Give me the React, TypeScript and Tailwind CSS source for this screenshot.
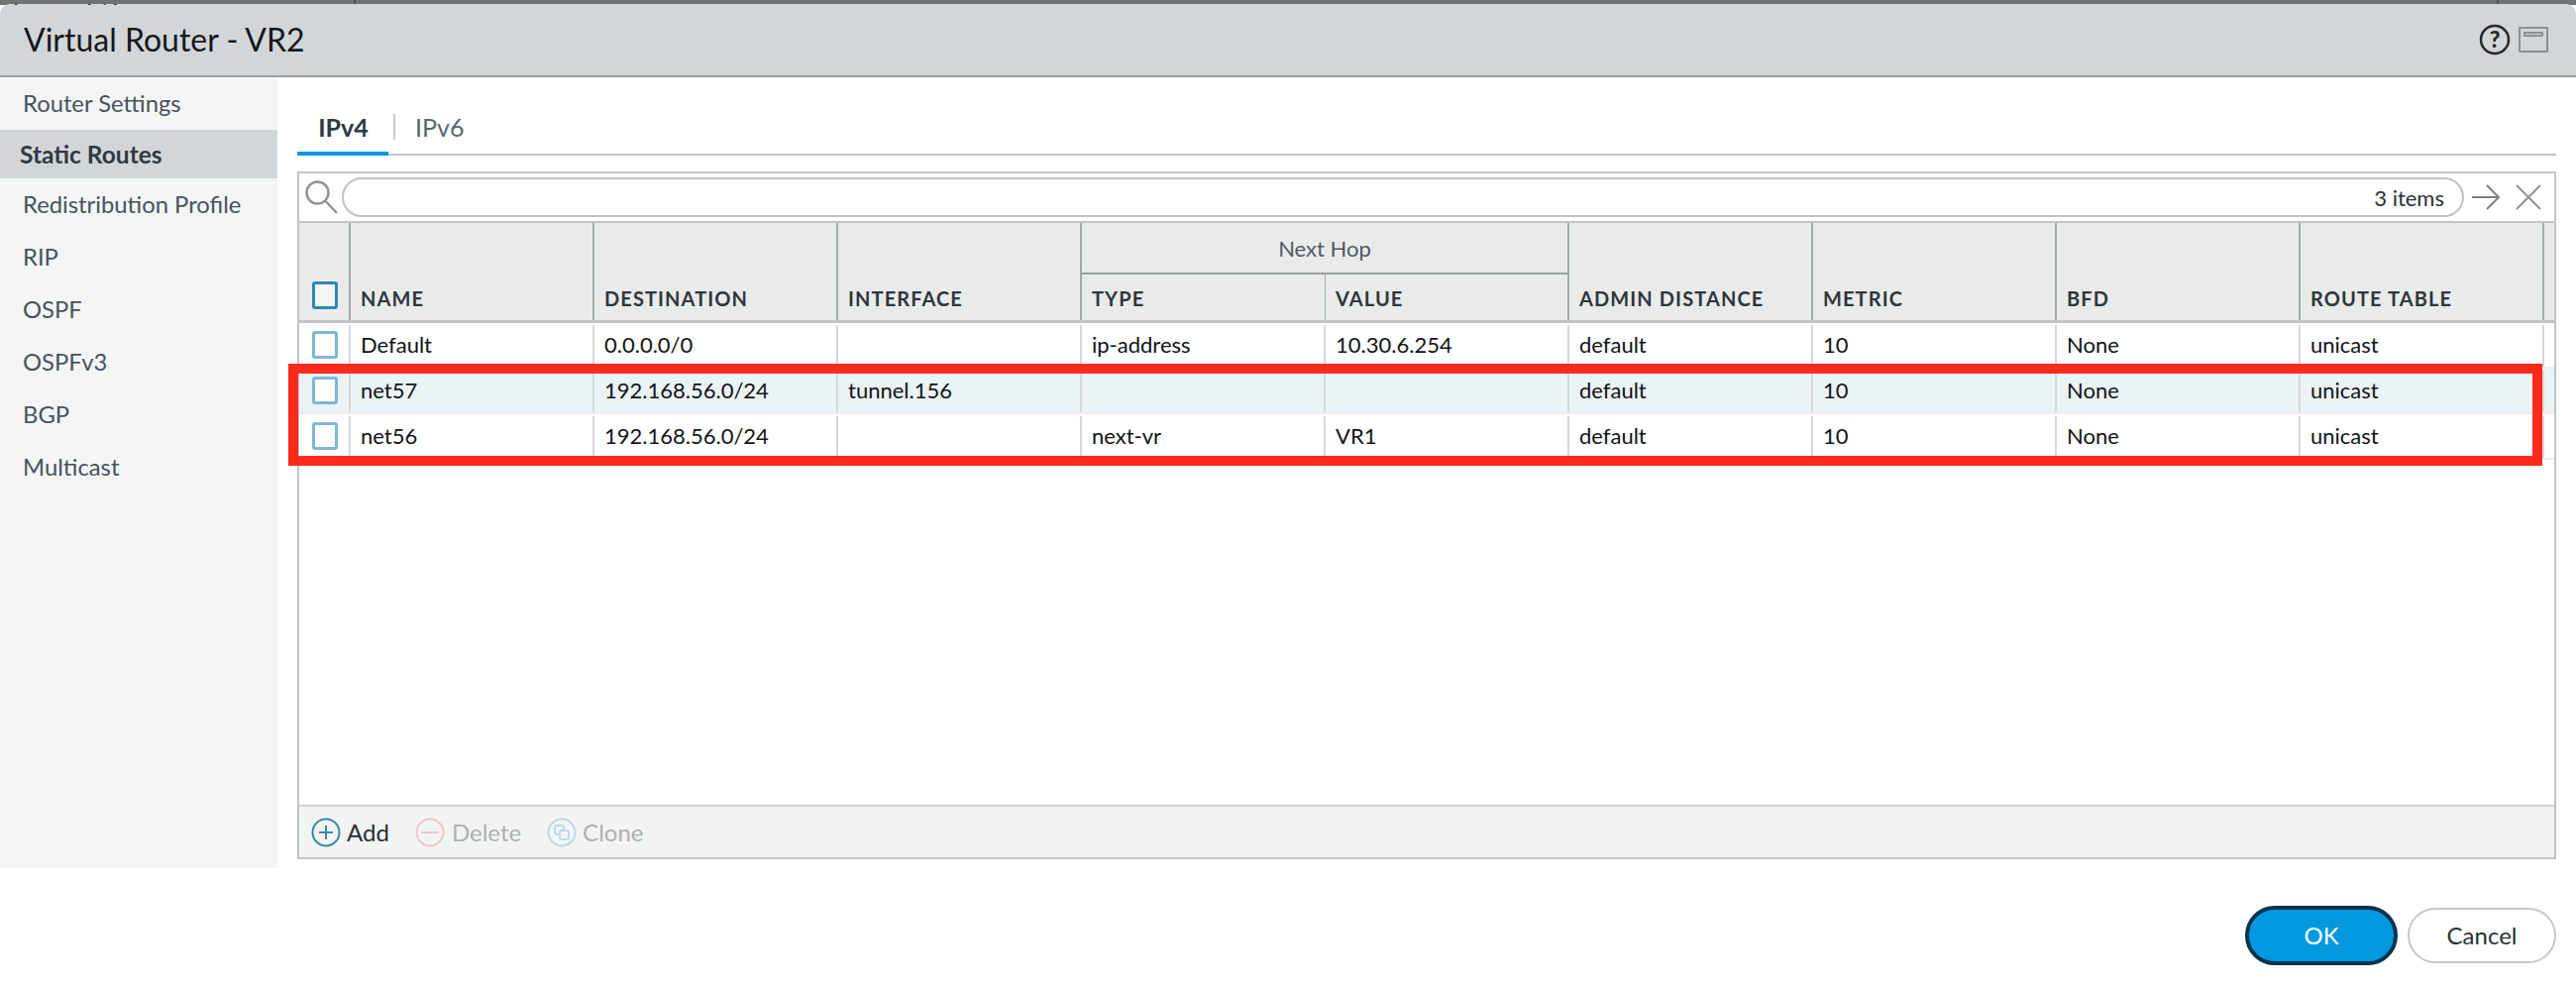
import { ReactNode } from 'react'

const sideItems = ['Redistribution Profile', 'RIP', 'OSPF', 'OSPFv3', 'BGP', 'Multicast']

const rows = [
  { name: 'Default', dest: '0.0.0.0/0', iface: '', type: 'ip-address', value: '10.30.6.254', hover: false },
  { name: 'net57', dest: '192.168.56.0/24', iface: 'tunnel.156', type: '', value: '', hover: true },
  { name: 'net56', dest: '192.168.56.0/24', iface: '', type: 'next-vr', value: 'VR1', hover: false },
]

function Check({ strong }: { strong?: boolean }) {
  return (
    <div
      className={
        strong
          ? 'w-[26px] h-[28px] rounded-[3px] border-[3px] border-[#2f87b3] bg-[#f4f6f7]'
          : 'w-[26px] h-[28px] rounded-[3px] border-[3px] border-[#7db8d4] bg-white'
      }
    />
  )
}

function HeadCell({ children, w = 'w-[246px]' }: { children?: ReactNode; w?: string }) {
  return (
    <div className={`${w} h-full shrink-0 border-r-2 border-[#a3a8ab] flex items-end pl-[10px] pb-[10px]`}>
      <span className="text-[20px] leading-[24px] font-bold tracking-[1.1px] text-[#2f363c]">{children}</span>
    </div>
  )
}

function Cell({ children, w = 'w-[246px]' }: { children?: ReactNode; w?: string }) {
  return (
    <div className={`${w} shrink-0 h-full pt-[2px]`}>
      <div className="h-full border-r-2 border-[#d5d8da] flex items-center pl-[10px] pb-[3px] text-[22px] text-[#111416]">
        {children}
      </div>
    </div>
  )
}

export default function App() {
  return (
    <div className="w-[2600px] h-[998px] overflow-hidden bg-white font-['Lato',sans-serif] flex flex-col">
      {/* page behind the dialog, only a sliver shows */}
      <div className="h-[5px] shrink-0 bg-[#6e7373] flex items-end overflow-hidden text-[24px] leading-[24px] text-[#1c1f21]">
        <div className="w-[359px] h-full border-r-2 border-[#4f5355] flex items-end">
          <span className="block translate-y-[19px] -ml-[8px]">ethernet1/6</span>
        </div>
        <div className="w-[2163px] h-full border-r-2 border-[#4f5355]" />
      </div>

      <div className="-mt-[1px] h-[74px] shrink-0 bg-[#d3d6d9] border-b-2 border-[#9b9fa2] rounded-t-[10px] flex items-center justify-between pl-[24px] pr-[28px]">
        <h1 className="text-[32px] font-normal text-[#14181b]">Virtual Router - VR2</h1>
        <div className="flex items-center gap-[8px]">
          <svg width="32" height="32" viewBox="0 0 32 32" fill="none">
            <circle cx="16" cy="16" r="14" stroke="#23282c" strokeWidth="2.5" />
            <text x="16" y="24" textAnchor="middle" fontSize="23" fontWeight="900" fill="#23282c" fontFamily="Lato, sans-serif">?</text>
          </svg>
          <div className="w-[30px] h-[26px] border-2 border-[#8a8f92] rounded-[1px] p-[3px]">
            <div className="h-[5px] border-2 border-[#8a8f92] rounded-[1px]" />
          </div>
        </div>
      </div>

      <div className="flex-1 flex min-h-0">
        <aside className="w-[280px] h-[798px] shrink-0 bg-[#f4f5f5] text-[23.8px] text-[#47535c] flex flex-col">
          <div className="h-[53px] flex items-center pl-[23px]">Router Settings</div>
          <div className="h-[49px] flex items-center pl-[20px] pt-[1px] bg-[#d3d6d9] font-bold text-[#2f3a42] text-[24.5px]">Static Routes</div>
          {sideItems.map((item) => (
            <div key={item} className="h-[53px] flex items-center pl-[23px]">
              {item}
            </div>
          ))}
        </aside>

        <main className="flex-1 pl-[20px] pr-[20px] flex flex-col min-w-0">
          <div className="h-[79px] shrink-0 border-b-2 border-[#c0c4c8] flex items-end">
            <div className="w-[92px] h-[45px] border-b-4 border-[#0096dc] -mb-[2px] rounded-b-[1px] flex items-center justify-center text-[25px] font-bold text-[#2f3a42] pb-[7px] pl-[1px]">
              IPv4
            </div>
            <div className="w-[2px] h-[26px] bg-[#c8cbce] ml-[5px] mb-[14px]" />
            <div className="h-[45px] ml-[20px] flex items-center text-[25px] text-[#5a666e] pb-[7px]">IPv6</div>
          </div>

          <div className="mt-[16px] h-[694px] shrink-0 border-2 border-[#c0c4c8] flex flex-col relative">
            <div className="h-[50px] shrink-0 border-b-2 border-[#c0c4c8] flex items-center">
              <svg className="ml-[6px] shrink-0" width="34" height="34" viewBox="0 0 34 34" fill="none">
                <circle cx="12.5" cy="12.5" r="11" stroke="#8f9498" strokeWidth="2.5" />
                <path d="M20.5 21 L32 33" stroke="#8f9498" strokeWidth="2.5" />
              </svg>
              <div className="ml-[3px] w-[2142px] h-[40px] shrink-0 rounded-full border-2 border-[#bfc3c6] flex items-center justify-end pr-[18px] text-[22px] text-[#2a3136]">
                3 items
              </div>
              <svg className="ml-[7px] shrink-0" width="30" height="28" viewBox="0 0 30 28" fill="none">
                <path d="M1 14 H28 M16 2 L28 14 L16 26" stroke="#7b8084" strokeWidth="2" />
              </svg>
              <svg className="ml-[14px] shrink-0" width="28" height="28" viewBox="0 0 28 28" fill="none">
                <path d="M2 2 L26 26 M26 2 L2 26" stroke="#8f9497" strokeWidth="2" />
              </svg>
            </div>

            <div className="h-[98px] shrink-0 bg-[#e9ebea] flex">
              <div className="w-[52px] h-full shrink-0 border-r-2 border-[#a3a8ab] flex items-end pl-[13px] pb-[11px]">
                <Check strong />
              </div>
              <HeadCell>NAME</HeadCell>
              <HeadCell>DESTINATION</HeadCell>
              <HeadCell>INTERFACE</HeadCell>
              <div className="w-[492px] shrink-0 h-full border-r-2 border-[#a3a8ab] flex flex-col">
                <div className="h-[52px] border-b-2 border-[#9ba0a3] flex items-center justify-center text-[22px] text-[#4f5a62]">
                  Next Hop
                </div>
                <div className="flex-1 flex">
                  <div className="w-[246px] h-full border-r border-[#a3a8ab] flex items-end pl-[10px] pb-[10px]">
                    <span className="text-[20px] leading-[24px] font-bold tracking-[1.1px] text-[#2f363c]">TYPE</span>
                  </div>
                  <div className="flex items-end pl-[10px] pb-[10px]">
                    <span className="text-[20px] leading-[24px] font-bold tracking-[1.1px] text-[#2f363c]">VALUE</span>
                  </div>
                </div>
              </div>
              <HeadCell>ADMIN DISTANCE</HeadCell>
              <HeadCell>METRIC</HeadCell>
              <HeadCell>BFD</HeadCell>
              <HeadCell>ROUTE TABLE</HeadCell>
            </div>
            <div className="h-[3px] shrink-0 bg-[#c0c4c8]" />

            {rows.map((r) => (
              <div
                key={r.name}
                className={
                  r.hover
                    ? 'h-[46px] shrink-0 flex border-b-2 border-[#eceeee] bg-[#ebf3f6]'
                    : 'h-[46px] shrink-0 flex border-b-2 border-[#eceeee] bg-white'
                }
              >
                <div className="w-[52px] shrink-0 h-full pt-[2px]">
                  <div className="h-full border-r-2 border-[#d5d8da] flex items-center pl-[13px] pb-[2px]">
                    <Check />
                  </div>
                </div>
                <Cell>{r.name}</Cell>
                <Cell>{r.dest}</Cell>
                <Cell>{r.iface}</Cell>
                <Cell>{r.type}</Cell>
                <Cell>{r.value}</Cell>
                <Cell>default</Cell>
                <Cell>10</Cell>
                <Cell>None</Cell>
                <Cell>unicast</Cell>
              </div>
            ))}

            <div className="flex-1" />
            <div className="h-[53px] shrink-0 border-t-2 border-[#ccd0d2] bg-[#f2f4f4] flex items-center text-[24px]">
              <svg className="ml-[12px] shrink-0" width="30" height="30" viewBox="0 0 30 30" fill="none">
                <circle cx="15" cy="15" r="13.5" stroke="#3f87a8" strokeWidth="2" />
                <path d="M15 8 V22 M8 15 H22" stroke="#3f87a8" strokeWidth="2" />
              </svg>
              <span className="ml-[6px] text-[#2b2e30]">Add</span>
              <svg className="ml-[26px] shrink-0" width="30" height="30" viewBox="0 0 30 30" fill="none">
                <circle cx="15" cy="15" r="13.5" stroke="#ecc6c8" strokeWidth="2" />
                <path d="M6 15 H24" stroke="#ecc6c8" strokeWidth="2" />
              </svg>
              <span className="ml-[7px] text-[#adb1b1]">Delete</span>
              <svg className="ml-[26px] shrink-0" width="30" height="30" viewBox="0 0 30 30" fill="none">
                <circle cx="15" cy="15" r="13.5" stroke="#bcd9e6" strokeWidth="2" />
                <rect x="8" y="8" width="9" height="9" rx="2" stroke="#bcd9e6" strokeWidth="2" />
                <rect x="13" y="13" width="9" height="9" rx="2" stroke="#bcd9e6" strokeWidth="2" fill="#f2f4f4" />
              </svg>
              <span className="ml-[6px] text-[#adb1b1]">Clone</span>
            </div>

            {/* red annotation over rows 2 and 3 */}
            <div className="absolute left-[-11px] top-[192px] w-[2275px] h-[103px] border-[10px] border-[#ff2a1c] pointer-events-none" />
          </div>

          <div className="mt-[47px] flex items-center justify-end gap-[10px]">
            <button className="w-[154px] h-[60px] rounded-full border-[4px] border-[#03344f] bg-[#0099e0] text-white text-[24px]">OK</button>
            <button className="w-[150px] h-[56px] rounded-full border-2 border-[#c4c8cb] bg-white text-[#2a3136] text-[24px]">Cancel</button>
          </div>
        </main>
      </div>
    </div>
  )
}
